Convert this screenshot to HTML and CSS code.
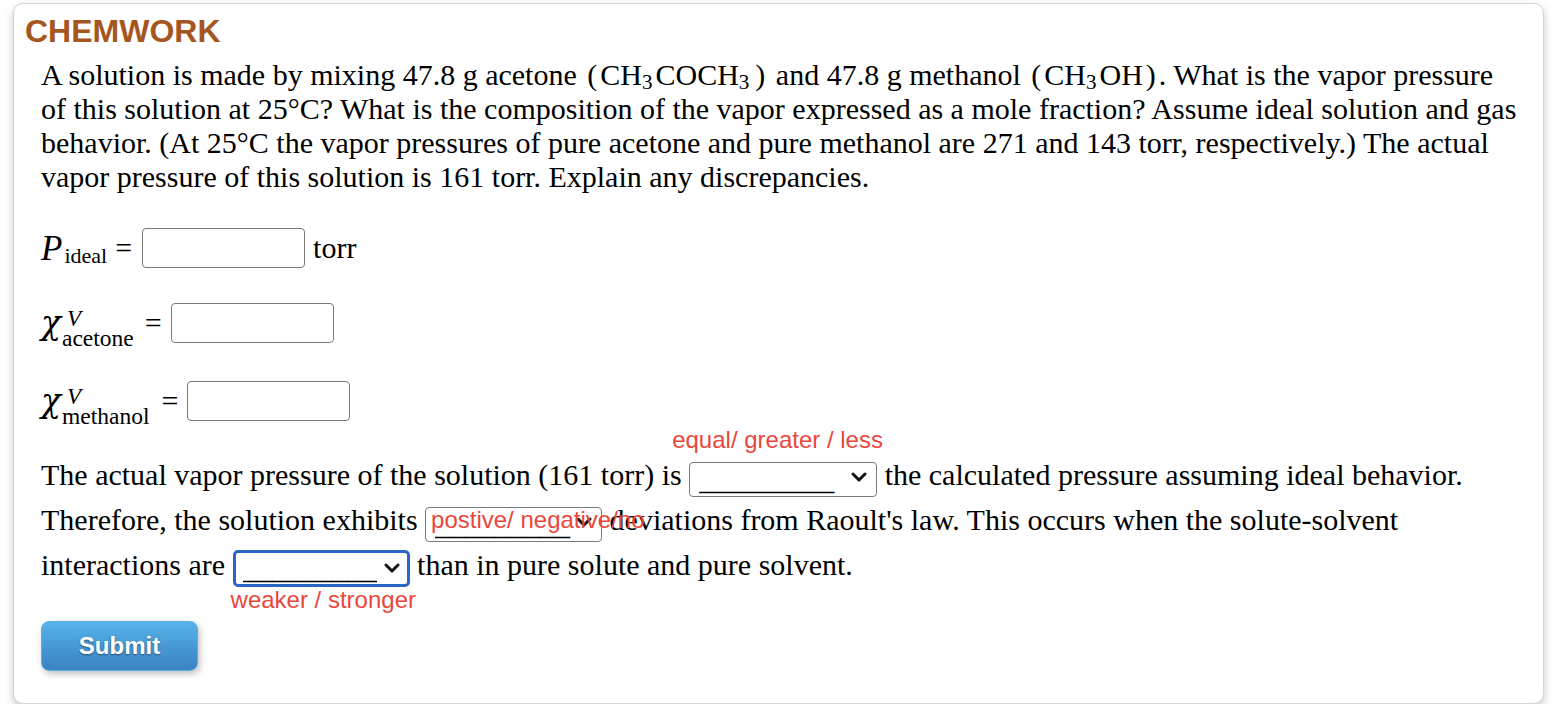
FILE: index.html
```html
<!DOCTYPE html>
<html>
<head>
<meta charset="utf-8">
<link rel="stylesheet" href="styles.css">
</head>
<body>
<div class="card">
  <h1 class="title">CHEMWORK</h1>
  <div class="content">
    <p class="question">A solution is made by mixing 47.8 g acetone <span class="m"><span class="par">(</span>CH<sub>3</sub>COCH<sub>3</sub><span class="par">)</span></span> and 47.8 g methanol <span class="m"><span class="par">(</span>CH<sub>3</sub>OH<span class="par">)</span></span>. What is the vapor pressure of this solution at 25°C? What is the composition of the vapor expressed as a mole fraction? Assume ideal solution and gas behavior. (At 25°C the vapor pressures of pure acetone and pure methanol are 271 and 143 torr, respectively.) The actual vapor pressure of this solution is 161 torr. Explain any discrepancies.</p>

    <div class="row row-p">
      <span class="sym"><i class="var">P</i><span class="sub">ideal</span></span>
      <span class="eq">=</span>
      <input class="box" type="text">
      <span class="unit">torr</span>
    </div>

    <div class="row row-x1">
      <span class="sym"><i class="var chi">χ</i><span class="supsub"><i class="sup">V</i><span class="sb">acetone</span></span></span>
      <span class="eq eq-x1">=</span>
      <input class="box" type="text">
    </div>

    <div class="row row-x2">
      <span class="sym"><i class="var chi">χ</i><span class="supsub"><i class="sup">V</i><span class="sb">methanol</span></span></span>
      <span class="eq eq-x2">=</span>
      <input class="box" type="text">
    </div>

    <p class="fill">The actual vapor pressure of the solution (161 torr) is <span class="pick pick-a"><span class="hint hint-above">equal/ greater / less</span><select class="sel sel-wide"><option>_________</option></select><svg class="chev" viewBox="0 0 16 10" width="16" height="10"><path d="M2 2 L8 8 L14 2" fill="none" stroke="#111" stroke-width="3" stroke-linecap="round" stroke-linejoin="round"/></svg></span> the calculated pressure assuming ideal behavior.<br>Therefore, the solution exhibits <span class="pick pick-b"><select class="sel sel-narrow"><option>_________</option></select><svg class="chev" viewBox="0 0 16 10" width="16" height="10"><path d="M2 2 L8 8 L14 2" fill="none" stroke="#111" stroke-width="3" stroke-linecap="round" stroke-linejoin="round"/></svg><span class="hint hint-over">postive/ negative/no</span></span> deviations from Raoult's law. This occurs when the solute-solvent<br>interactions are <span class="pick pick-c"><select class="sel sel-narrow sel-focus"><option>_________</option></select><svg class="chev chev-focus" viewBox="0 0 16 10" width="16" height="10"><path d="M2 2 L8 8 L14 2" fill="none" stroke="#111" stroke-width="3" stroke-linecap="round" stroke-linejoin="round"/></svg><span class="hint hint-below">weaker / stronger</span></span> than in pure solute and pure solvent.</p>

    <button class="submit" type="button">Submit</button>
  </div>
</div>
</body>
</html>
```
FILE: styles.css
```css
html, body {
  margin: 0;
  padding: 0;
  background: #ffffff;
}

.card {
  box-sizing: border-box;
  margin: 3px 0 0 13px;
  width: 1531px;
  height: 701px;
  border: 1px solid #d4d4d4;
  border-radius: 10px;
  background: #fff;
  box-shadow: 0 4px 8px rgba(0, 0, 0, 0.22);
  padding: 9px 24px 0 11px;
}

.title {
  margin: 0;
  font-family: "Liberation Sans", Arial, sans-serif;
  font-weight: bold;
  font-size: 32px;
  line-height: 36px;
  color: #a5561f;
}

.content {
  padding-left: 16px;
  font-family: "Liberation Serif", "Times New Roman", serif;
  font-size: 30px;
  color: #000;
}

.question {
  margin: 9px 0 0 0;
  line-height: 34px;
}

.m {
  font-family: "Liberation Serif", "Times New Roman", serif;
  font-size: 30px;
}

.par {
  margin: 0 3px;
}

.m sub {
  font-size: 21px;
  vertical-align: -4px;
  line-height: 0;
  margin-right: 3px;
}

.row {
  display: flex;
  align-items: center;
  height: 40px;
}

.row-p { margin-top: 34px; }
.row-x1 { margin-top: 35px; }
.row-x2 { margin-top: 38px; }

.sym {
  display: inline-flex;
  align-items: flex-end;
  font-family: "Liberation Serif", "Times New Roman", serif;
}

.var {
  font-size: 35px;
  font-style: italic;
  line-height: 1;
}

.chi {
  font-family: "DejaVu Serif", serif;
  font-size: 33px;
  margin-bottom: 2px;
}

.sub {
  font-size: 22px;
  margin-left: 2px;
  margin-bottom: -3px;
}

.supsub {
  display: inline-flex;
  flex-direction: column;
  margin-left: 1px;
  line-height: 1;
}

.sup {
  font-size: 23px;
  margin-left: 5px;
  margin-bottom: -3px;
}

.sb {
  font-size: 23.5px;
  margin-bottom: -10px;
}

.eq {
  font-size: 30px;
  margin: 0 10px 0 8px;
}

.eq-x1 { margin-left: 11px; margin-right: 9px; }
.eq-x2 { margin-left: 12px; margin-right: 9px; }

.box {
  box-sizing: border-box;
  width: 163px;
  height: 40px;
  border: 1.5px solid #7a7a7a;
  border-radius: 4px;
  background: #fff;
  margin: 0;
  padding: 0 6px;
}

.unit {
  margin-left: 8px;
}

.fill {
  margin: 31px 0 0 0;
  line-height: 45px;
}

.pick {
  position: relative;
  display: inline-block;
  vertical-align: middle;
  line-height: normal;
}

.sel {
  appearance: none;
  -webkit-appearance: none;
  box-sizing: border-box;
  height: 35px;
  margin: 0;
  padding: 0 30px 0 9px;
  border: 1.5px solid #7a7a7a;
  border-radius: 4px;
  background: #fff;
  font-family: "Liberation Serif", "Times New Roman", serif;
  font-size: 30px;
  color: #000;
  vertical-align: middle;
}

.sel-wide { width: 188px; }
.sel-narrow { width: 177px; }

.sel-focus {
  height: 37px;
  border: 3px solid #2a66c6;
  border-radius: 5px;
  padding: 0 30px 0 7px;
  line-height: 31px;
}

.chev {
  position: absolute;
  right: 10px;
  top: 13px;
  pointer-events: none;
}

.chev-focus {
  top: 14px;
}

.hint {
  position: absolute;
  font-family: "Liberation Sans", Arial, sans-serif;
  font-size: 24px;
  line-height: 26px;
  color: #e8473c;
  white-space: nowrap;
}

.hint-above {
  left: -17px;
  top: -32px;
}

.hint-over {
  left: 6px;
  top: 3px;
}

.hint-below {
  left: -2px;
  top: 38px;
}

.submit {
  margin-top: 34px;
  width: 157px;
  height: 50px;
  border: 1px solid #5aaee4;
  border-radius: 8px;
  background: linear-gradient(to bottom, #58b3ea 0%, #4597d2 55%, #3b84c0 100%);
  box-shadow: 2px 3px 6px rgba(0, 0, 0, 0.25);
  color: #fff;
  font-family: "Liberation Sans", Arial, sans-serif;
  font-weight: bold;
  font-size: 24px;
  text-shadow: 0 1px 2px rgba(0, 0, 0, 0.45);
  padding: 0;
}
```
